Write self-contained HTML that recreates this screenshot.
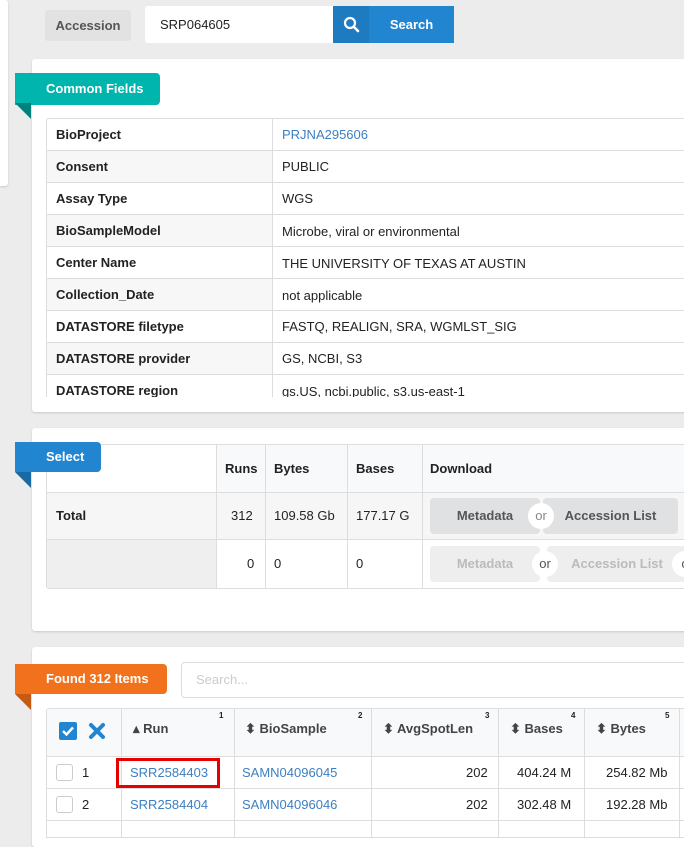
<!DOCTYPE html>
<html><head><style>
*{box-sizing:border-box;margin:0;padding:0}
body{width:684px;height:828px;overflow:hidden;background:#ececec;font-family:"Liberation Sans",sans-serif;font-size:13px;color:#222;position:relative}
.a{position:absolute}
.card{position:absolute;background:#fff;border-radius:3px;box-shadow:0 1px 2px rgba(0,0,0,.15)}
.tab{position:absolute;color:#fff;font-weight:bold;font-size:13px;border-radius:0 4px 4px 0;padding-left:31px;line-height:30px}
.fold{position:absolute;width:0;height:0;border-top:16px solid;border-left:16px solid transparent}
.cell{position:absolute;line-height:32px;white-space:nowrap;overflow:hidden}
.lnk{color:#3d7fc1}
.b{font-weight:bold}
.btn{position:absolute;border-radius:4px;text-align:center;font-weight:bold;line-height:36px;font-size:13px}
.or{position:absolute;width:26px;height:26px;border-radius:50%;background:#fff;text-align:center;line-height:26px;font-size:13px}
</style></head><body>
<div class="a" style="left:0;top:0;width:8px;height:186px;background:#fff;border-radius:0 3px 3px 0;box-shadow:0 1px 2px rgba(0,0,0,.15)"></div>
<div class="a" style="left:45px;top:10px;width:86px;height:31px;background:#e2e2e2;border-radius:3px;color:#555;font-weight:bold;line-height:31px;text-align:center">Accession</div>
<div class="a" style="left:145px;top:6px;width:188px;height:37px;background:#fff;border-radius:3px 0 0 3px;line-height:37px;padding-left:15px">SRP064605</div>
<div class="a" style="left:333px;top:6px;width:36px;height:37px;background:#1f7bc0"><svg width="36" height="37"><circle cx="17" cy="17" r="5" fill="none" stroke="#fff" stroke-width="2.2"/><path d="M21 21l4 4" stroke="#fff" stroke-width="2.6" stroke-linecap="round"/></svg></div>
<div class="a" style="left:369px;top:6px;width:85px;height:37px;background:#2185d0;color:#fff;font-weight:bold;line-height:37px;text-align:center">Search</div>

<div class="card" style="left:32px;top:59px;width:660px;height:353px"></div>
<div class="tab" style="left:15px;top:73px;width:145px;background:#00b5ad;line-height:32px">Common Fields</div>
<div class="fold" style="left:15px;top:103px;border-top-color:#00827c"></div>
<div class="a" style="left:46px;top:118px;width:650px;height:279px;overflow:hidden;border:1px solid #ddd;border-bottom:none;border-radius:3px 0 0 0"></div>

<div class="card" style="left:32px;top:428px;width:660px;height:203px"></div>
<div class="a" style="left:46px;top:444px;width:650px;height:145px;border:1px solid #ddd;border-radius:3px 0 0 3px;overflow:hidden">
<div class="a" style="left:169px;top:0;width:500px;height:47px;background:#f8f9fa"></div>
<div class="a" style="left:0;top:47px;width:650px;height:48px;background:#f6f6f6;border-top:1px solid #ddd;border-bottom:1px solid #ddd"></div>
<div class="a" style="left:0;top:95px;width:169px;height:50px;background:#efefef"></div>
<div class="a" style="left:169px;top:0;width:1px;height:145px;background:#ddd"></div>
<div class="a" style="left:218px;top:0;width:1px;height:145px;background:#ddd"></div>
<div class="a" style="left:300px;top:0;width:1px;height:145px;background:#ddd"></div>
<div class="a" style="left:375px;top:0;width:1px;height:145px;background:#ddd"></div>
</div>
<div class="cell b" style="left:225px;top:453px">Runs</div>
<div class="cell b" style="left:274px;top:453px">Bytes</div>
<div class="cell b" style="left:356px;top:453px">Bases</div>
<div class="cell b" style="left:430px;top:453px">Download</div>
<div class="cell b" style="left:56px;top:500px">Total</div>
<div class="cell" style="left:231px;top:500px">312</div>
<div class="cell" style="left:274px;top:500px">109.58 Gb</div>
<div class="cell" style="left:356px;top:500px">177.17 G</div>
<div class="cell" style="left:247px;top:548px">0</div>
<div class="cell" style="left:274px;top:548px">0</div>
<div class="cell" style="left:356px;top:548px">0</div>
<div class="btn" style="left:430px;top:498px;width:110px;background:#e0e1e2;color:#555">Metadata</div>
<div class="btn" style="left:543px;top:498px;width:135px;background:#e0e1e2;color:#555">Accession List</div>
<div class="or" style="left:528px;top:503px;color:#888">or</div>
<div class="btn" style="left:430px;top:546px;width:110px;background:#eeeeee;color:#bbb">Metadata</div>
<div class="btn" style="left:547px;top:546px;width:140px;background:#eeeeee;color:#bbb">Accession List</div>
<div class="or" style="left:532px;top:551px;color:#555">or</div>
<div class="or" style="left:672px;top:551px;color:#555">o</div>
<div class="tab" style="left:15px;top:442px;width:86px;background:#2185d0">Select</div>
<div class="fold" style="left:15px;top:472px;border-top-color:#1a69a4"></div>

<div class="card" style="left:32px;top:647px;width:660px;height:200px"></div>
<div class="tab" style="left:15px;top:664px;width:152px;background:#f2711c;padding-left:31px">Found 312 Items</div>
<div class="fold" style="left:15px;top:694px;border-top-color:#c45a13"></div>
<div class="a" style="left:181px;top:662px;width:520px;height:36px;border:1px solid #ddd;border-radius:4px;color:#ccc;line-height:34px;padding-left:14px">Search...</div>
<div class="a" style="left:46px;top:708px;width:650px;height:130px;border:1px solid #ddd;border-radius:3px 0 0 0;overflow:hidden">
<div class="a" style="left:0;top:0;width:650px;height:48px;background:#f8f9fa;border-bottom:1px solid #ddd"></div>
<div class="a" style="left:0;top:79px;width:650px;height:1px;background:#ddd"></div>
<div class="a" style="left:0;top:111px;width:650px;height:1px;background:#ddd"></div>
<div class="a" style="left:74px;top:0;width:1px;height:130px;background:#ddd"></div>
<div class="a" style="left:187px;top:0;width:1px;height:130px;background:#ddd"></div>
<div class="a" style="left:324px;top:0;width:1px;height:130px;background:#ddd"></div>
<div class="a" style="left:451px;top:0;width:1px;height:130px;background:#ddd"></div>
<div class="a" style="left:537px;top:0;width:1px;height:130px;background:#ddd"></div>
<div class="a" style="left:632px;top:0;width:1px;height:130px;background:#ddd"></div>
</div>
<div class="a" style="left:59px;top:722px;width:18px;height:18px;background:#2185d0;border-radius:2px"><svg width="18" height="18"><path d="M4 9l3.5 3.5L14 5.5" fill="none" stroke="#fff" stroke-width="2.5"/></svg></div>
<div class="a" style="left:88px;top:722px"><svg width="18" height="18"><path d="M3 3L15 15M15 3L3 15" stroke="#2185d0" stroke-width="4" stroke-linecap="round"/></svg></div>
<div class="cell b" style="left:133px;top:713px;color:#444">▴ Run</div>
<div class="cell b" style="left:245px;top:713px;color:#444">⬍ BioSample</div>
<div class="cell b" style="left:383px;top:713px;color:#444">⬍ AvgSpotLen</div>
<div class="cell b" style="left:510px;top:713px;color:#444">⬍ Bases</div>
<div class="cell b" style="left:596px;top:713px;color:#444">⬍ Bytes</div>
<div class="a b" style="left:219px;top:711px;font-size:8px">1</div>
<div class="a b" style="left:358px;top:711px;font-size:8px">2</div>
<div class="a b" style="left:485px;top:711px;font-size:8px">3</div>
<div class="a b" style="left:571px;top:711px;font-size:8px">4</div>
<div class="a b" style="left:665px;top:711px;font-size:8px">5</div>
<div class="a" style="left:56px;top:764px;width:17px;height:17px;border:1px solid #ccc;border-radius:3px;background:#fff"></div>
<div class="a" style="left:56px;top:796px;width:17px;height:17px;border:1px solid #ccc;border-radius:3px;background:#fff"></div>
<div class="cell" style="left:82px;top:757px">1</div>
<div class="cell" style="left:82px;top:789px">2</div>
<div class="cell lnk" style="left:130px;top:757px">SRR2584403</div>
<div class="cell lnk" style="left:130px;top:789px">SRR2584404</div>
<div class="a" style="left:116px;top:758px;width:104px;height:30px;border:3px solid #e60000"></div>
<div class="cell lnk" style="left:242px;top:757px">SAMN04096045</div>
<div class="cell lnk" style="left:242px;top:789px">SAMN04096046</div>
<div class="cell" style="left:466px;top:757px">202</div>
<div class="cell" style="left:466px;top:789px">202</div>
<div class="cell" style="left:517px;top:757px">404.24 M</div>
<div class="cell" style="left:517px;top:789px">302.48 M</div>
<div class="cell" style="left:606px;top:757px">254.82 Mb</div>
<div class="cell" style="left:606px;top:789px">192.28 Mb</div>

<div class="a" style="left:47px;top:119px;width:640px;height:278px;overflow:hidden">
<div style="position:absolute;left:0;top:0;width:640px">
<div style="height:32px;border-bottom:1px solid #ddd;position:relative"><span class="cell b" style="left:9px;top:0">BioProject</span><span class="cell lnk" style="left:235px;top:0">PRJNA295606</span></div>
<div style="height:32px;border-bottom:1px solid #ddd;position:relative;background:linear-gradient(90deg,#f7f7f7 225px,#fff 225px)"><span class="cell b" style="left:9px;top:0">Consent</span><span class="cell" style="left:235px;top:0">PUBLIC</span></div>
<div style="height:32px;border-bottom:1px solid #ddd;position:relative"><span class="cell b" style="left:9px;top:0">Assay Type</span><span class="cell" style="left:235px;top:0">WGS</span></div>
<div style="height:32px;border-bottom:1px solid #ddd;position:relative;background:linear-gradient(90deg,#f7f7f7 225px,#fff 225px)"><span class="cell b" style="left:9px;top:0">BioSampleModel</span><span class="cell" style="left:235px;top:1px">Microbe, viral or environmental</span></div>
<div style="height:32px;border-bottom:1px solid #ddd;position:relative"><span class="cell b" style="left:9px;top:0">Center Name</span><span class="cell" style="left:235px;top:1px">THE UNIVERSITY OF TEXAS AT AUSTIN</span></div>
<div style="height:32px;border-bottom:1px solid #ddd;position:relative;background:linear-gradient(90deg,#f7f7f7 225px,#fff 225px)"><span class="cell b" style="left:9px;top:0">Collection_Date</span><span class="cell" style="left:235px;top:1px">not applicable</span></div>
<div style="height:32px;border-bottom:1px solid #ddd;position:relative"><span class="cell b" style="left:9px;top:0">DATASTORE filetype</span><span class="cell" style="left:235px;top:0">FASTQ, REALIGN, SRA, WGMLST_SIG</span></div>
<div style="height:32px;border-bottom:1px solid #ddd;position:relative;background:linear-gradient(90deg,#f7f7f7 225px,#fff 225px)"><span class="cell b" style="left:9px;top:0">DATASTORE provider</span><span class="cell" style="left:235px;top:0">GS, NCBI, S3</span></div>
<div style="height:32px;position:relative"><span class="cell b" style="left:9px;top:0">DATASTORE region</span><span class="cell" style="left:235px;top:1px">gs.US, ncbi.public, s3.us-east-1</span></div>
</div>
<div style="position:absolute;left:225px;top:0;width:1px;height:300px;background:#ddd"></div>
</div>
</body></html>
